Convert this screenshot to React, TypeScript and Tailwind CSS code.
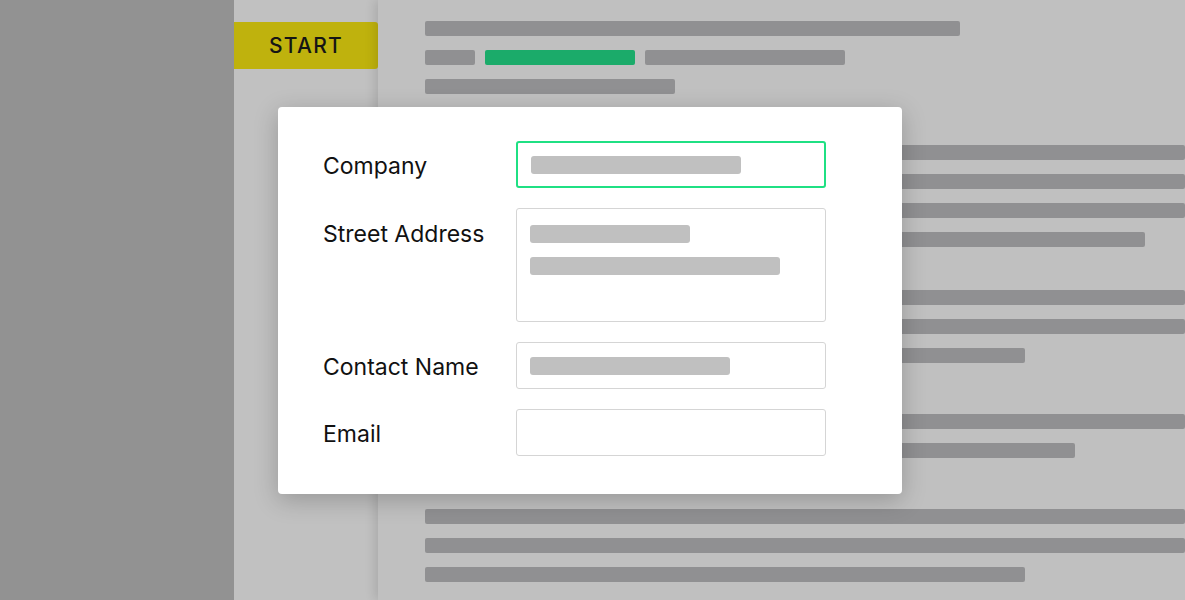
import React from "react";

// skeleton line used across the background page
const Bar: React.FC<{ w?: string; green?: boolean }> = ({ w = "w-full", green }) => (
	<div className={`h-[15px] shrink-0 rounded-[2px] ${w} ${green ? "bg-[#1bab6a]" : "bg-[#909092]"}`} />
);

const Placeholder: React.FC<{ w: string }> = ({ w }) => (
	<div className={`h-[18px] rounded-[3px] bg-[#c0c0c0] ${w}`} />
);

const Field: React.FC<{ active?: boolean; children?: React.ReactNode }> = ({ active, children }) => (
	<div
		className={`flex h-[47px] items-center rounded-[3px] px-[13px] ${
			active ? "border-2 border-[#1fe083]" : "border border-[#d5d5d5]"
		}`}
	>
		{children}
	</div>
);

export default function App() {
	return (
		<div
			className="relative flex h-[600px] w-full overflow-hidden bg-[#c0c0c0]"
			style={{ fontFamily: "Inter, 'Noto Sans', sans-serif" }}
		>
			{/* left rail */}
			<div className="w-[234px] shrink-0 bg-[#929292]" />

			{/* sidebar */}
			<div className="w-[144px] shrink-0 bg-[#c1c1c1] pt-[22px]">
				<div className="flex h-[47px] items-center justify-center rounded-r-[3px] bg-[#bfb20d] text-[21px] font-medium tracking-[0.06em] text-[#151515]">
					START
				</div>
			</div>

			{/* document */}
			<div className="relative flex flex-1 flex-col bg-[#c0c0c0] pl-[47px] pt-[21px] shadow-[-3px_0_10px_rgba(0,0,0,0.12)]">
				<div className="flex flex-col gap-[14px]">
					<Bar w="w-[535px]" />
					<div className="flex gap-[10px]">
						<Bar w="w-[50px]" />
						<Bar w="w-[150px]" green />
						<Bar w="w-[200px]" />
					</div>
					<Bar w="w-[250px]" />
				</div>
				<div className="mt-[51px] flex flex-col gap-[14px]">
					<Bar />
					<Bar />
					<Bar />
					<Bar w="w-[720px]" />
				</div>
				<div className="mt-[43px] flex flex-col gap-[14px]">
					<Bar />
					<Bar />
					<Bar w="w-[600px]" />
				</div>
				<div className="mt-[51px] flex flex-col gap-[14px]">
					<Bar />
					<Bar w="w-[650px]" />
				</div>
				<div className="mt-[51px] flex flex-col gap-[14px]">
					<Bar />
					<Bar />
					<Bar w="w-[600px]" />
				</div>
			</div>

			{/* dialog */}
			<div className="absolute left-[278px] top-[107px] w-[624px] rounded-[4px] bg-white pb-[38px] pl-[45px] pt-[34px] shadow-[0_6px_24px_rgba(0,0,0,0.22)]">
				<div className="grid grid-cols-[193px_310px] gap-y-[20px] text-[23px] text-[#111]">
					<div className="flex items-center pt-[3px]">Company</div>
					<Field active>
						<Placeholder w="w-[210px]" />
					</Field>

					<div className="pt-[9px]">Street Address</div>
					<div className="flex h-[114px] flex-col gap-[14px] rounded-[3px] border border-[#d5d5d5] px-[13px] pt-[16px]">
						<Placeholder w="w-[160px]" />
						<Placeholder w="w-[250px]" />
					</div>

					<div className="flex items-center pt-[4px]">Contact Name</div>
					<Field>
						<Placeholder w="w-[200px]" />
					</Field>

					<div className="flex items-center pt-[3px]">Email</div>
					<Field />
				</div>
			</div>
		</div>
	);
}
